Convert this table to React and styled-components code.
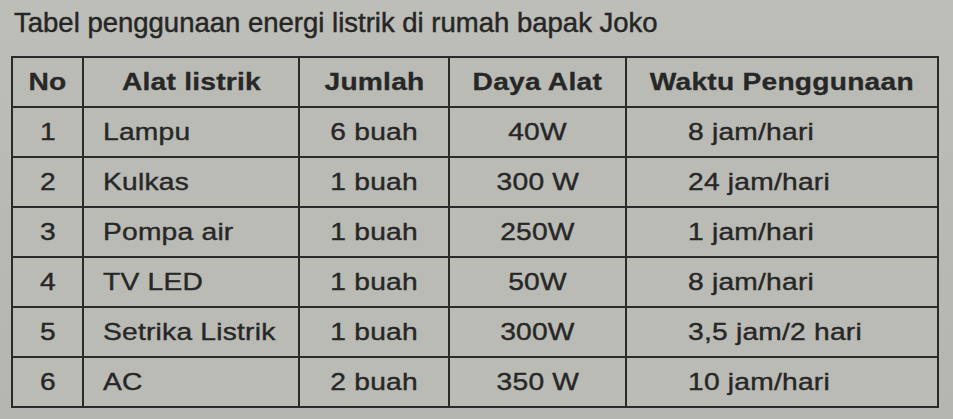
import React from "react";
import styled, { createGlobalStyle } from "styled-components";

const Global = createGlobalStyle`
  html, body { margin: 0; padding: 0; }
  body {
    background: #b9bab4;
    font-family: "Liberation Sans", Arial, sans-serif;
    color: #2b2b2b;
  }
`;

const Page = styled.div`
  width: 953px;
  height: 419px;
  padding: 7px 0 0 11px;
  box-sizing: border-box;
  background: linear-gradient(180deg, #bdbeb8 0%, #b8b9b3 60%, #b5b6b0 100%);
`;

const Title = styled.div`
  font-size: 27.5px;
  line-height: 32px;
  padding-left: 3px;
  color: #262626;
  -webkit-text-stroke: 0.45px #262626;
`;

const Table = styled.div`
  margin-top: 17px;
  display: grid;
  grid-template-columns: 69px 214px 148px 175px 310px;
  grid-auto-rows: 48px;
  gap: 2px;
  padding: 2px;
  width: 928px;
  box-sizing: border-box;
  background: #2a2a2a;
`;

const Cell = styled.div`
  background: #babbb5;
  display: flex;
  align-items: center;
  justify-content: ${(p) => (p.$align === "left" ? "flex-start" : "center")};
  padding-left: ${(p) => p.$pad || 0}px;
  box-sizing: border-box;
`;

const Text = styled.span`
  display: inline-block;
  font-size: 24.5px;
  font-weight: ${(p) => (p.$head ? 700 : 400)};
  letter-spacing: 0.2px;
  color: #272727;
  white-space: nowrap;
  transform: scaleX(1.15);
  transform-origin: ${(p) => (p.$align === "left" ? "left center" : "center center")};
  -webkit-text-stroke: ${(p) => (p.$head ? "0.3px" : "0.4px")} #272727;
`;

const headers = ["No", "Alat listrik", "Jumlah", "Daya Alat", "Waktu Penggunaan"];
const rows = [
  ["1", "Lampu", "6 buah", "40W", "8 jam/hari"],
  ["2", "Kulkas", "1 buah", "300 W", "24 jam/hari"],
  ["3", "Pompa air", "1 buah", "250W", "1 jam/hari"],
  ["4", "TV LED", "1 buah", "50W", "8 jam/hari"],
  ["5", "Setrika Listrik", "1 buah", "300W", "3,5 jam/2 hari"],
  ["6", "AC", "2 buah", "350 W", "10 jam/hari"],
];

export default function App() {
  return (
    <>
      <Global />
      <Page>
        <Title>Tabel penggunaan energi listrik di rumah bapak Joko</Title>
        <Table>
          {headers.map((h) => (
            <Cell key={h}>
              <Text $head>{h}</Text>
            </Cell>
          ))}
          {rows.map((r) => (
            <React.Fragment key={r[0]}>
              <Cell><Text>{r[0]}</Text></Cell>
              <Cell $align="left" $pad={19}><Text $align="left">{r[1]}</Text></Cell>
              <Cell><Text>{r[2]}</Text></Cell>
              <Cell><Text>{r[3]}</Text></Cell>
              <Cell $align="left" $pad={61}><Text $align="left">{r[4]}</Text></Cell>
            </React.Fragment>
          ))}
        </Table>
      </Page>
    </>
  );
}
